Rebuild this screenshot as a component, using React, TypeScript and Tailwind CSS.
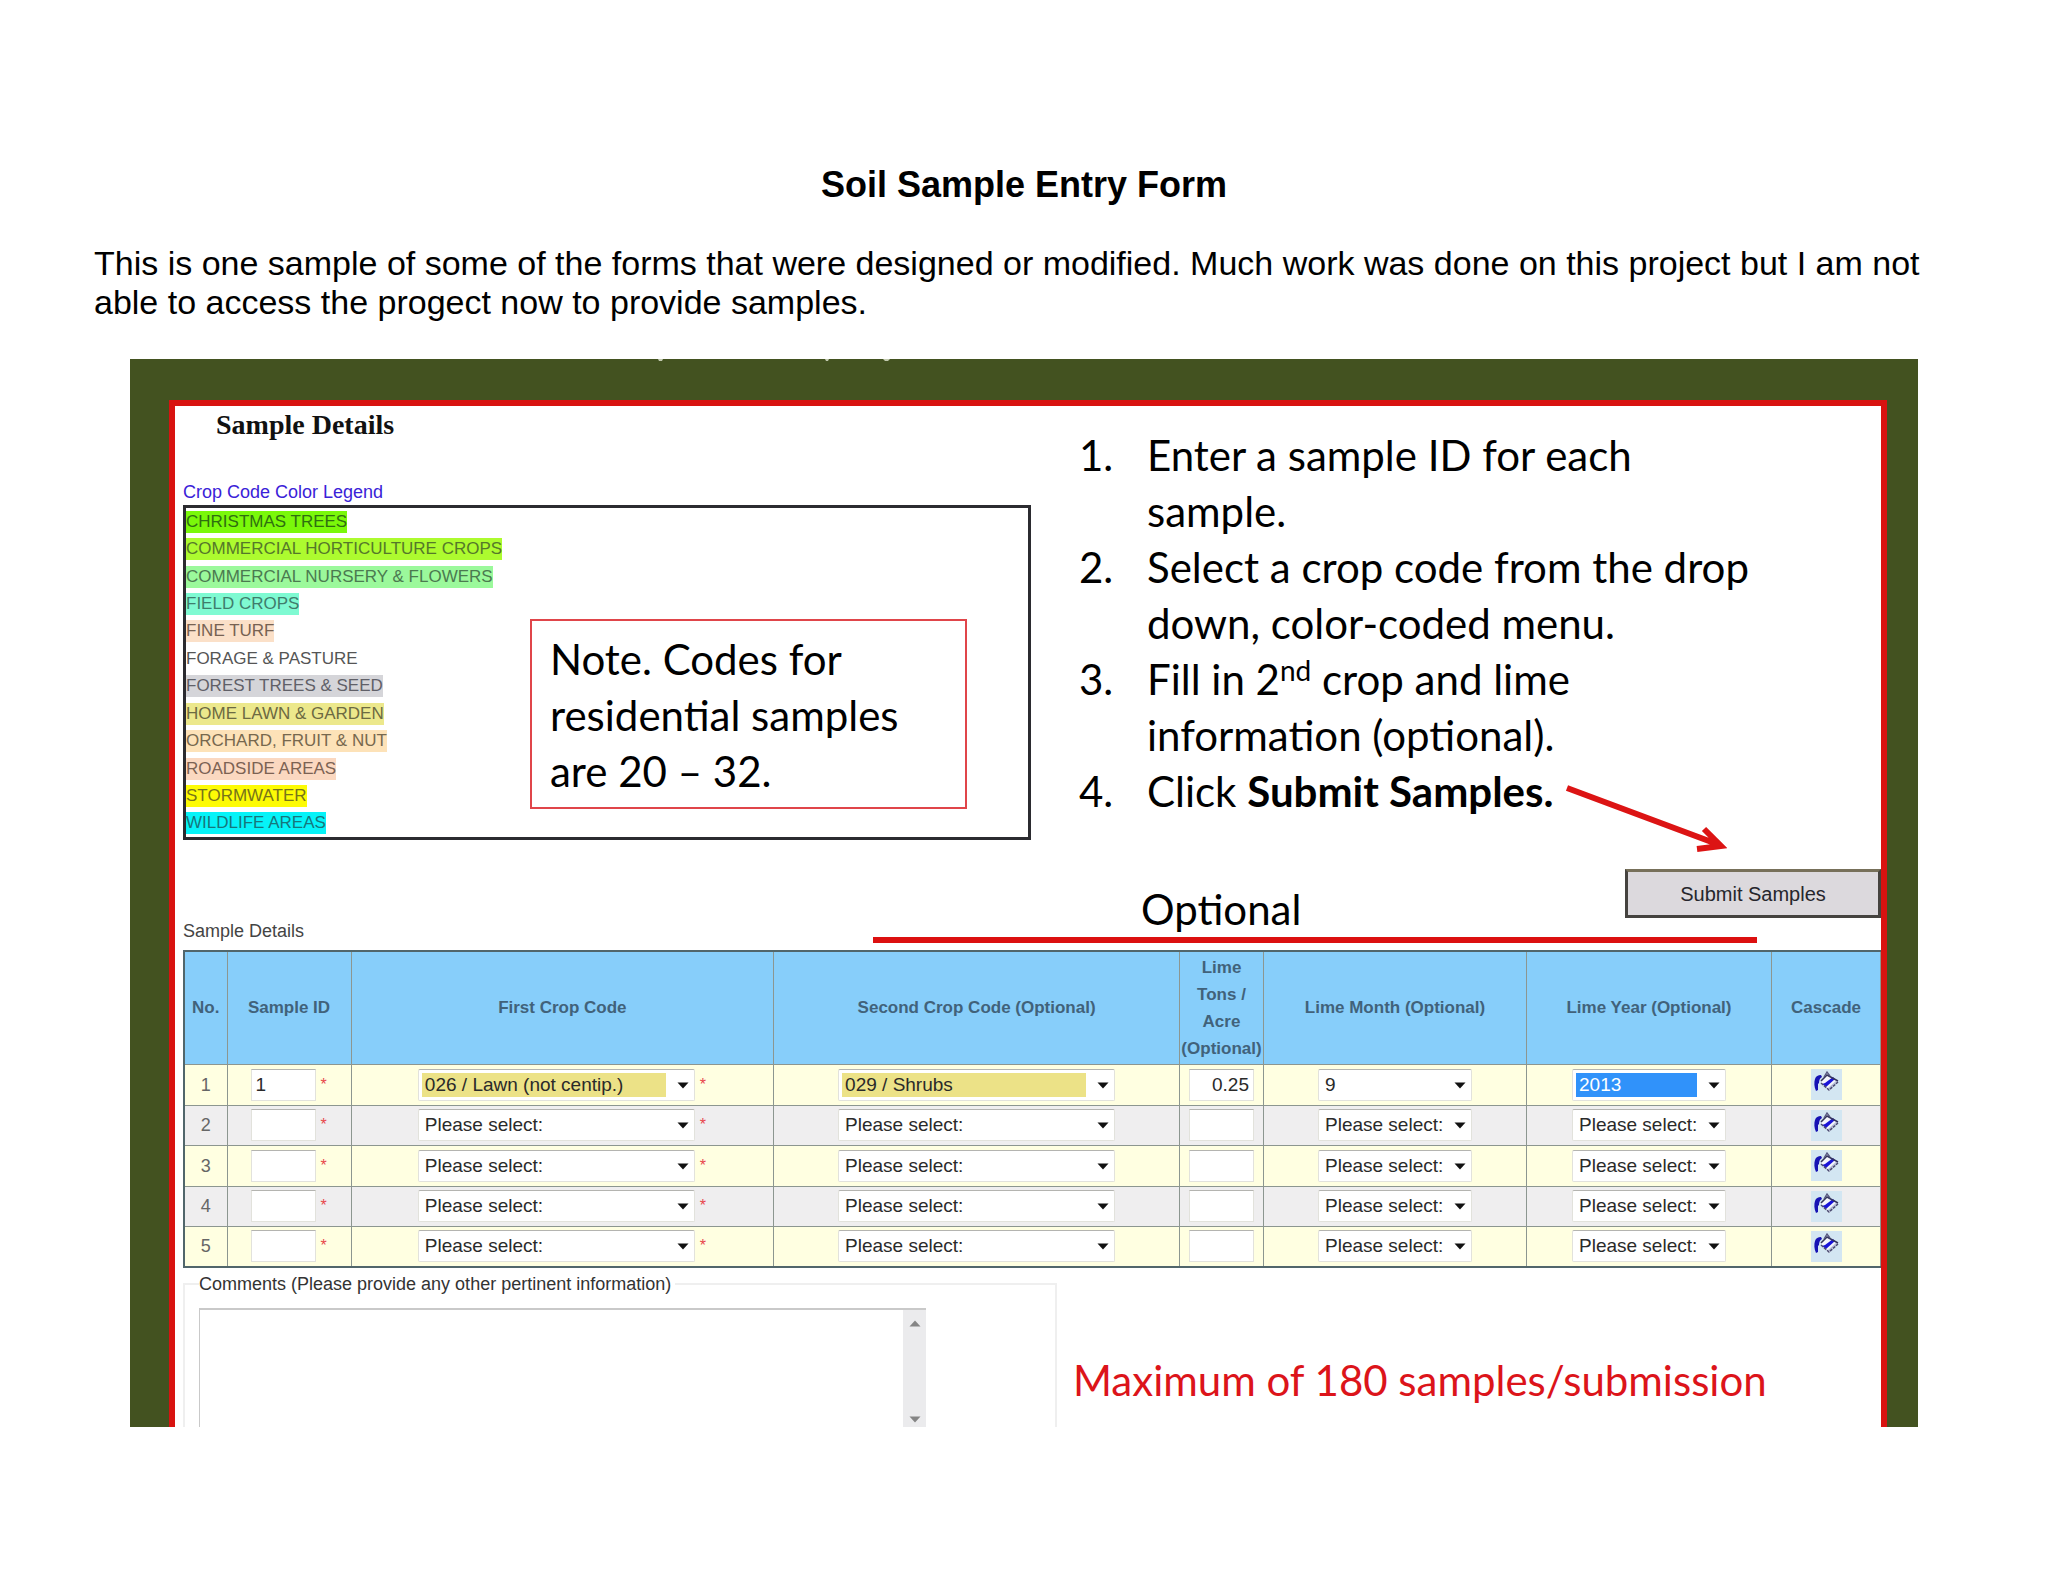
import React from "react";

const legend = [
  { name: "CHRISTMAS TREES", color: "bg-[#7af80a] text-[#2f6f10]" },
  { name: "COMMERCIAL HORTICULTURE CROPS", color: "bg-[#adfb2f] text-[#55782a]" },
  { name: "COMMERCIAL NURSERY & FLOWERS", color: "bg-[#9bf99b] text-[#4b7a50]" },
  { name: "FIELD CROPS", color: "bg-[#7ffad2] text-[#3f7d6c]" },
  { name: "FINE TURF", color: "bg-[#fbe0c8] text-[#776252]" },
  { name: "FORAGE & PASTURE", color: "text-[#555555]" },
  { name: "FOREST TREES & SEED", color: "bg-[#d5d5d9] text-[#606068]" },
  { name: "HOME LAWN & GARDEN", color: "bg-[#ece88c] text-[#6c6a42]" },
  { name: "ORCHARD, FRUIT & NUT", color: "bg-[#fde2b8] text-[#77684e]" },
  { name: "ROADSIDE AREAS", color: "bg-[#fbd8c0] text-[#7c6253]" },
  { name: "STORMWATER", color: "bg-[#fdfb05] text-[#77741a]" },
  { name: "WILDLIFE AREAS", color: "bg-[#06f3f8] text-[#16777c]" },
];

const columns = [
  { title: "No.", width: "w-[43px]" },
  { title: "Sample ID", width: "w-[124px]" },
  { title: "First Crop Code", width: "w-[25%]" },
  { title: "Second Crop Code (Optional)", width: "w-[24%]" },
  { title: "Lime Tons / Acre (Optional)", width: "w-[84px]" },
  { title: "Lime Month (Optional)", width: "w-[263px]" },
  { title: "Lime Year (Optional)", width: "w-[245px]" },
  { title: "Cascade", width: "w-[109px]" },
];

const PROMPT = "Please select:";

const rows = [
  { no: 1, id: "1", first: "026 / Lawn (not centip.)", second: "029 / Shrubs", tons: "0.25", month: "9", year: "2013" },
  { no: 2, id: "", first: PROMPT, second: PROMPT, tons: "", month: PROMPT, year: PROMPT },
  { no: 3, id: "", first: PROMPT, second: PROMPT, tons: "", month: PROMPT, year: PROMPT },
  { no: 4, id: "", first: PROMPT, second: PROMPT, tons: "", month: PROMPT, year: PROMPT },
  { no: 5, id: "", first: PROMPT, second: PROMPT, tons: "", month: PROMPT, year: PROMPT },
];

const fieldBox = "h-8 border border-[#e2e2dc] border-t-[#b4b4b0] bg-white text-[19px] text-[#2a2a2a]";

function Picker({ label, value, width, fill = "" }: { label: string; value: string; width: string; fill?: string }) {
  return (
    <span className={`relative inline-block rounded-xs align-middle ${fieldBox} ${width}`}>
      <select
        aria-label={label}
        defaultValue={value}
        className={`block h-full w-full appearance-none bg-clip-content py-[3px] pr-7 pl-[3px] indent-[3px] leading-6 outline-none ${fill}`}
      >
        {value !== PROMPT && <option>{PROMPT}</option>}
        <option>{value}</option>
      </select>
      <svg viewBox="0 0 12 7" className="pointer-events-none absolute top-3 right-[5px] h-[7px] w-3" aria-hidden="true">
        <path d="M0.5 0.5h11L6 6.5z" fill="#111" />
      </svg>
    </span>
  );
}

function Required() {
  return <span className="ml-1 inline-block w-2 text-center align-middle text-base leading-4 text-[#e8474c]">*</span>;
}

function BucketIcon() {
  return (
    <svg viewBox="0 0 26 22" className="h-[22px] w-[26px]" aria-hidden="true">
      <path d="M3 20C1 16 1 11 2 8 3 5 5 4 8 4L9 6C7 7 6 9 6 12L5 13V19z" fill="#1713b4" />
      <path d="M8 11L14 3 25 10 16 20z" fill="#f4f6fb" />
      <path d="M9 13L12 12 20 6 22 8 13 16z" fill="#1a14d8" />
      <path d="M15 17L24 9 25 11 16 19z" fill="#b9bfd8" />
      <path d="M8 10L14 4 25 10" fill="none" stroke="#34345c" strokeWidth="1.5" />
      <path d="M8 12L16 19 25 11" fill="none" stroke="#4a4a70" strokeWidth="1.5" strokeDasharray="3 1" />
      <path d="M11 6L14 1 17 5" fill="none" stroke="#55557c" strokeWidth="1.3" />
    </svg>
  );
}

function Legend() {
  return (
    <div className="w-[848px] shrink-0">
      <h2 className="pl-[33px] font-['Liberation_Serif',serif] text-[28px] leading-[38px] font-bold text-[#111]">
        Sample Details
      </h2>
      <p className="mt-9 text-lg leading-6 text-[#3a22d8]">Crop Code Color Legend</p>
      <div className="mt-px flex h-[335px] border-3 border-[#2b2b30]">
        <ul className="flex w-[344px] flex-col text-[17px] whitespace-nowrap">
          {legend.map((item) => (
            <li key={item.name} className="flex flex-1 items-center leading-[22px]">
              <span className={item.color}>{item.name}</span>
            </li>
          ))}
        </ul>
        <p className="mt-[111px] h-[190px] w-[437px] border-2 border-[#e0454a] py-2.5 pl-[18px] font-[Lato,sans-serif] text-[42px] leading-[56px] text-black">
          Note. Codes for
          <br />
          residential samples
          <br />
          are 20 – 32.
        </p>
      </div>
    </div>
  );
}

function Instructions() {
  return (
    <ol className="ml-12 grid max-w-[686px] flex-1 grid-cols-[68px_1fr] content-start pt-[21px] font-[Lato,sans-serif] text-[42px] leading-[56px] text-black">
      <li className="contents">
        <span>1.</span>
        <span>Enter a sample ID for each sample.</span>
      </li>
      <li className="contents">
        <span>2.</span>
        <span>Select a crop code from the drop down, color-coded menu.</span>
      </li>
      <li className="contents">
        <span>3.</span>
        <span>
          Fill in 2<span className="inline-block h-7 align-[14px] text-[28px] leading-7">nd</span> crop and lime
          information (optional).
        </span>
      </li>
      <li className="contents">
        <span>4.</span>
        <span>
          Click{" "}
          <b className="relative">
            Submit Samples.
            <svg viewBox="0 0 162 72" className="absolute top-4 left-full ml-3 h-[72px] w-[162px]" aria-hidden="true">
              <path d="M2 6L152 62M139 47l17 17-24 3" fill="none" stroke="#dc1414" strokeWidth="6" />
            </svg>
          </b>
        </span>
      </li>
    </ol>
  );
}

function SamplesTable() {
  const cell = "border border-[#8c9690] p-0 text-center";
  return (
    <table className="w-full table-fixed border-collapse border-2 border-r-0 border-[#51666b]">
      <thead>
        <tr className="h-[113px] bg-[#87cefa] text-[17px] leading-[27px] text-[#41627a]">
          {columns.map((column) => (
            <th key={column.title} scope="col" className={`${cell} font-bold ${column.width}`}>
              {column.title}
            </th>
          ))}
        </tr>
      </thead>
      <tbody>
        {rows.map((row) => (
          <tr key={row.no} className="odd:h-[41px] even:h-10 odd:bg-[#ffffe1] even:bg-[#efeeef]">
            <td className={`${cell} text-lg leading-6 text-[#666]`}>{row.no}</td>
            <td className={cell}>
              <input aria-label={`Sample ID ${row.no}`} defaultValue={row.id} className={`w-[65px] px-1 align-middle ${fieldBox}`} />
              <Required />
            </td>
            <td className={cell}>
              <Picker label={`First crop code ${row.no}`} value={row.first} width="w-[277px]" fill={row.no === 1 ? "bg-[#ece287]" : ""} />
              <Required />
            </td>
            <td className={cell}>
              <Picker label={`Second crop code ${row.no}`} value={row.second} width="w-[277px]" fill={row.no === 1 ? "bg-[#ece287]" : ""} />
            </td>
            <td className={cell}>
              <input aria-label={`Lime tons per acre ${row.no}`} defaultValue={row.tons} className={`w-[65px] px-1 text-right align-middle ${fieldBox}`} />
            </td>
            <td className={cell}>
              <Picker label={`Lime month ${row.no}`} value={row.month} width="w-[154px]" />
            </td>
            <td className={cell}>
              <Picker label={`Lime year ${row.no}`} value={row.year} width="w-[154px]" fill={row.no === 1 ? "bg-[#3092fa] text-white" : ""} />
            </td>
            <td className={cell}>
              <button type="button" aria-label={`Cascade row ${row.no}`} className="inline-flex size-[31px] items-start justify-center bg-[#d3e6f2] pt-0.5 align-middle">
                <BucketIcon />
              </button>
            </td>
          </tr>
        ))}
      </tbody>
    </table>
  );
}

function Comments() {
  return (
    <fieldset className="w-[874px] border-2 border-b-0 border-[#efefef] pl-3.5">
      <legend className="pr-1 text-lg leading-6 text-[#333]">
        <label htmlFor="comments">Comments (Please provide any other pertinent information)</label>
      </legend>
      <div className="mt-3 flex h-[119px] w-[727px] border-t-2 border-l border-[#c9c9c9]">
        <textarea id="comments" className="h-full flex-1 resize-none overflow-hidden p-1 text-lg outline-none" />
        <div className="flex w-[23px] flex-col items-center justify-between bg-[#ebebed] pt-2.5 pb-1" aria-hidden="true">
          <svg viewBox="0 0 12 7" className="h-[7px] w-3">
            <path d="M0.5 6.5h11L6 0.5z" fill="#858585" />
          </svg>
          <svg viewBox="0 0 12 7" className="h-[7px] w-3">
            <path d="M0.5 0.5h11L6 6.5z" fill="#858585" />
          </svg>
        </div>
      </div>
    </fieldset>
  );
}

export default function App() {
  return (
    <main className="bg-white px-[94px] pt-[164px] pb-[155px] font-['Liberation_Sans',Arial,sans-serif] text-black">
      <h1 className="text-center text-[36px] leading-[42px] font-bold">Soil Sample Entry Form</h1>
      <p className="mt-[38px] text-[34px] leading-[39px]">
        This is one sample of some of the forms that were designed or modified. Much work was done on this project but I
        am not able to access the progect now to provide samples.
      </p>
      <section className="relative mx-9 mt-[37px] bg-[#435220] pt-[41px] pr-[31px] pl-[39px]">
        <svg viewBox="0 0 240 3" className="absolute top-0 left-[526px] h-[3px] w-60" aria-hidden="true">
          <path d="M2 0h5l-1 2h-3zM169 0h4l-1 2h-2zM227 0h7l-2 2h-3z" fill="#c3cbb0" />
        </svg>
        <div className="border-6 border-b-0 border-[#d81310] bg-white pl-2">
          <div className="flex min-h-[463px]">
            <Legend />
            <Instructions />
          </div>
          <div className="grid grid-cols-[690px_884fr_124fr] pb-[7px]">
            <span className="col-start-1 row-span-2 row-start-1 self-end text-lg leading-6 text-[#444]">Sample Details</span>
            <span className="col-start-2 row-start-1 self-end pl-[268px] font-[Lato,sans-serif] text-[42px] leading-[56px]">
              Optional
            </span>
            <button
              type="button"
              className="col-span-2 col-start-2 row-start-1 mb-[19px] h-[49px] w-64 justify-self-end border-3 border-[#45433f] border-t-[#77705a] bg-[#dcd9dd] text-xl text-[#26262c]"
            >
              Submit Samples
            </button>
            <div className="col-start-2 row-start-2 h-1.5 bg-[#dc1010]" />
          </div>
          <SamplesTable />
          <div className="flex pt-1">
            <Comments />
            <p className="pt-[80px] pl-4 font-[Lato,sans-serif] text-[42px] leading-[56px] text-[#dc141a]">
              Maximum of 180 samples/submission
            </p>
          </div>
        </div>
      </section>
    </main>
  );
}
